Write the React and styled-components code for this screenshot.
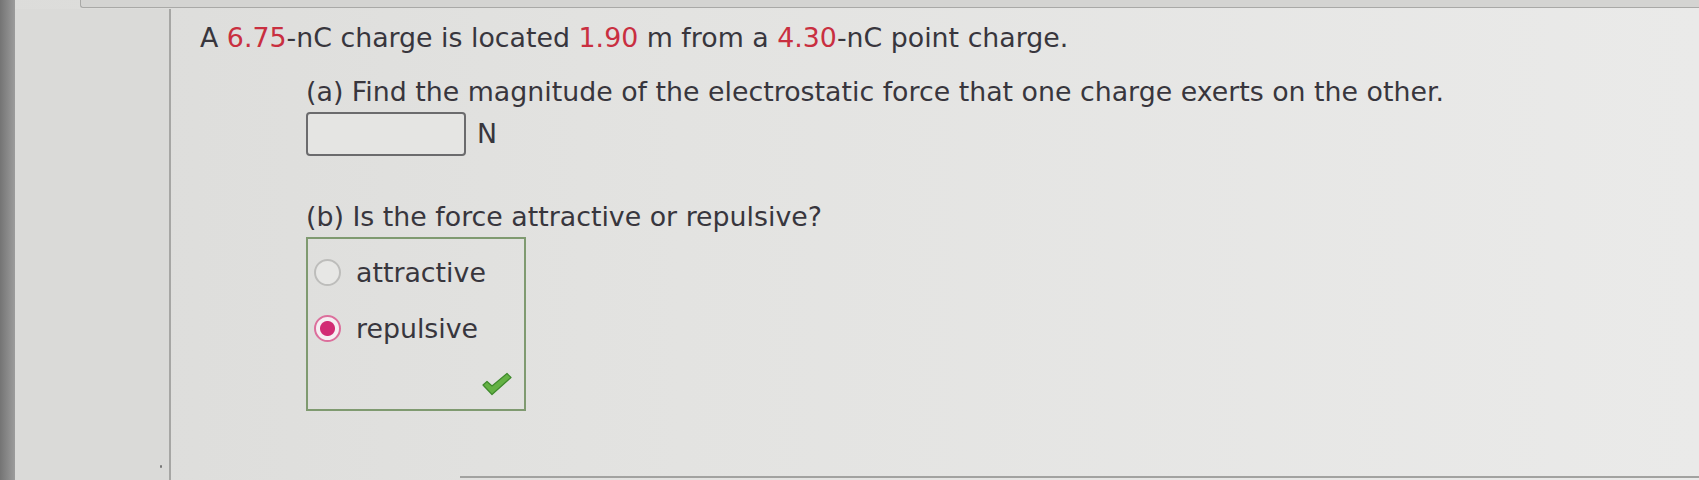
import React from "react";
import styled, { createGlobalStyle } from "styled-components";

const GlobalStyle = createGlobalStyle`
  html, body {
    margin: 0;
    padding: 0;
    background: #e3e3e1;
  }
  * {
    box-sizing: border-box;
  }
`;

const Page = styled.div`
  display: flex;
  flex-direction: column;
  width: 1699px;
  height: 480px;
  overflow: hidden;
  background: linear-gradient(90deg, #dcdcda 0%, #e3e3e1 40%, #eaeae9 100%);
  font-family: "DejaVu Sans", Verdana, sans-serif;
  color: #38363d;
`;

const TopStrip = styled.div`
  display: flex;
  height: 9px;
  flex-shrink: 0;
`;

const TopBand = styled.div`
  flex: 1;
  margin-left: 80px;
  height: 8px;
  background: #d4d4d2;
  border-left: 1.5px solid #a9a9a7;
  border-bottom: 1.5px solid #a9a9a7;
  border-bottom-left-radius: 3px;
`;

const Body = styled.div`
  flex: 1;
  display: flex;
`;

const LeftEdge = styled.div`
  width: 15px;
  margin-top: -9px;
  background: linear-gradient(90deg, #747474, #9c9c9c);
`;

const Sidebar = styled.div`
  width: 156px;
  border-right: 2px solid #a6a6a4;
  background: #dadad8;
  position: relative;
`;

const Speck = styled.span`
  position: absolute;
  left: 145px;
  top: 456px;
  width: 2px;
  height: 3px;
  background: #777;
  border-radius: 1px;
`;

const Main = styled.div`
  flex: 1;
  display: flex;
  flex-direction: column;
  padding: 13px 0 0 29px;
`;

const Line = styled.div`
  font-size: 26.8px;
  line-height: 32px;
  white-space: nowrap;
`;

const Num = styled.span`
  color: #c92f40;
`;

const Part = styled.div`
  display: flex;
  flex-direction: column;
  margin-left: 106px;
  margin-top: ${(p) => p.$top}px;
`;

const AnswerRow = styled.div`
  display: flex;
  align-items: center;
  gap: 11px;
  margin-top: 4px;
`;

const Input = styled.div`
  width: 160px;
  height: 44px;
  border: 2px solid #6b6b6d;
  border-radius: 4px;
  background: #e5e5e3;
`;

const Choices = styled.div`
  width: 220px;
  height: 174px;
  margin-top: 4px;
  border: 2px solid #7f9a70;
  display: flex;
  flex-direction: column;
  padding: 17px 12px 13px 6px;
`;

const Choice = styled.div`
  display: flex;
  align-items: center;
  gap: 15px;
  height: 32px;
  font-size: 26.8px;
  margin-bottom: 24px;
`;

const Radio = styled.span`
  width: 27px;
  height: 27px;
  border-radius: 50%;
  flex-shrink: 0;
  border: 2px solid ${(p) => (p.$checked ? "#dc6f9c" : "#bdbdbb")};
  background: ${(p) =>
    p.$checked
      ? "radial-gradient(circle, #d22b74 0 7px, #f6eef2 8px)"
      : "#e7e7e5"};
`;

const Footer = styled.div`
  margin-top: auto;
  display: flex;
  justify-content: flex-end;
`;

const Rule = styled.div`
  margin-top: auto;
  margin-left: 260px;
  margin-bottom: 2px;
  height: 2px;
  background: #a2a2a0;
`;

const Check = () => (
  <svg width="30" height="24" viewBox="0 0 30 24">
    <polygon
      points="1,13 5,9.5 10,14 25,1.5 29,5.5 10,22.5"
      fill="#64b144"
      stroke="#3f8a2c"
      strokeWidth="1.2"
      strokeLinejoin="round"
    />
  </svg>
);

export default function App() {
  return (
    <Page>
      <GlobalStyle />
      <TopStrip>
        <TopBand />
      </TopStrip>
      <Body>
        <LeftEdge />
        <Sidebar>
          <Speck />
        </Sidebar>
        <Main>
          <Line>
            A <Num>6.75</Num>-nC charge is located <Num>1.90</Num> m from a{" "}
            <Num>4.30</Num>-nC point charge.
          </Line>
          <Part $top={22}>
            <Line>
              (a) Find the magnitude of the electrostatic force that one charge
              exerts on the other.
            </Line>
            <AnswerRow>
              <Input />
              <Line>N</Line>
            </AnswerRow>
          </Part>
          <Part $top={45}>
            <Line>(b) Is the force attractive or repulsive?</Line>
            <Choices>
              <Choice>
                <Radio />
                attractive
              </Choice>
              <Choice>
                <Radio $checked />
                repulsive
              </Choice>
              <Footer>
                <Check />
              </Footer>
            </Choices>
          </Part>
          <Rule />
        </Main>
      </Body>
    </Page>
  );
}
